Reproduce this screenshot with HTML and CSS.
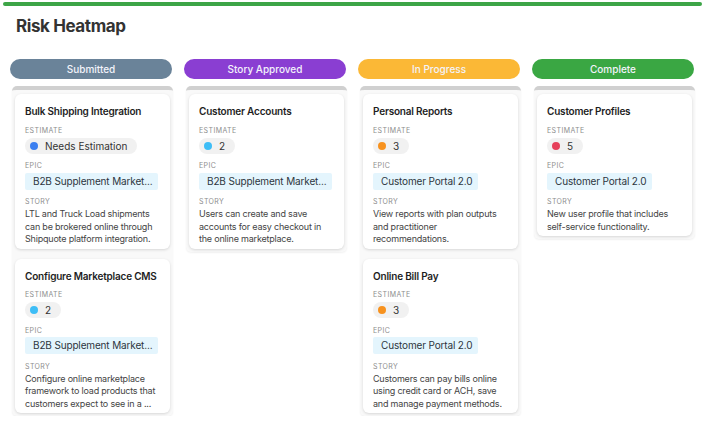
FILE: index.html
```html
<!DOCTYPE html>
<html>
<head>
<meta charset="utf-8">
<link rel="stylesheet" href="styles.css">
</head>
<body>
<div class="topbar"></div>
<h1 class="title">Risk Heatmap</h1>
<div class="board">
  <div class="column">
    <div class="col-head submitted">Submitted</div>
    <div class="col-body">
      <div class="card">
        <div class="card-title">Bulk Shipping Integration</div>
        <div class="label">Estimate</div>
        <div class="pill"><span class="dot blue"></span>Needs Estimation</div>
        <div class="label">Epic</div>
        <div class="epic">B2B Supplement Market...</div>
        <div class="label">Story</div>
        <div class="story">LTL and Truck Load shipments can be brokered online through Shipquote platform integration.</div>
      </div>
      <div class="card">
        <div class="card-title">Configure Marketplace CMS</div>
        <div class="label">Estimate</div>
        <div class="pill"><span class="dot sky"></span>2</div>
        <div class="label">Epic</div>
        <div class="epic">B2B Supplement Market...</div>
        <div class="label">Story</div>
        <div class="story">Configure online marketplace framework to load products that customers expect to see in a ...</div>
      </div>
    </div>
  </div>
  <div class="column">
    <div class="col-head approved">Story Approved</div>
    <div class="col-body">
      <div class="card">
        <div class="card-title">Customer Accounts</div>
        <div class="label">Estimate</div>
        <div class="pill"><span class="dot sky"></span>2</div>
        <div class="label">Epic</div>
        <div class="epic">B2B Supplement Market...</div>
        <div class="label">Story</div>
        <div class="story">Users can create and save accounts for easy checkout in the online marketplace.</div>
      </div>
    </div>
  </div>
  <div class="column">
    <div class="col-head progress">In Progress</div>
    <div class="col-body">
      <div class="card">
        <div class="card-title">Personal Reports</div>
        <div class="label">Estimate</div>
        <div class="pill"><span class="dot orange"></span>3</div>
        <div class="label">Epic</div>
        <div class="epic">Customer Portal 2.0</div>
        <div class="label">Story</div>
        <div class="story">View reports with plan outputs and practitioner recommendations.</div>
      </div>
      <div class="card">
        <div class="card-title">Online Bill Pay</div>
        <div class="label">Estimate</div>
        <div class="pill"><span class="dot orange"></span>3</div>
        <div class="label">Epic</div>
        <div class="epic">Customer Portal 2.0</div>
        <div class="label">Story</div>
        <div class="story">Customers can pay bills online using credit card or ACH, save and manage payment methods.</div>
      </div>
    </div>
  </div>
  <div class="column">
    <div class="col-head complete">Complete</div>
    <div class="col-body">
      <div class="card">
        <div class="card-title">Customer Profiles</div>
        <div class="label">Estimate</div>
        <div class="pill"><span class="dot red"></span>5</div>
        <div class="label">Epic</div>
        <div class="epic">Customer Portal 2.0</div>
        <div class="label">Story</div>
        <div class="story">New user profile that includes self-service functionality.</div>
      </div>
    </div>
  </div>
</div>
</body>
</html>
```
FILE: styles.css
```css
* { box-sizing: border-box; }
body {
  margin: 0;
  background: #ffffff;
  font-family: Inter, "Noto Sans", "Liberation Sans", sans-serif;
  color: #222;
}
.topbar {
  height: 4px;
  margin: 2px 6px 0 3px;
  border-radius: 2px;
  background: #3da547;
}
.title {
  margin: 10px 0 0 16px;
  font-size: 17px;
  line-height: 20px;
  font-weight: 700;
  color: #333;
  letter-spacing: -0.4px;
}
.board {
  display: flex;
  align-items: flex-start;
  gap: 12px;
  padding-left: 10px;
  margin-top: 23px;
}
.column {
  width: 162px;
  display: flex;
  flex-direction: column;
}
.col-head {
  height: 20px;
  border-radius: 10px;
  text-align: center;
  font-size: 10px;
  line-height: 20px;
  font-weight: 500;
  color: #f3f3fb;
}
.submitted { background: #6a8399; }
.approved { background: #8a3ed2; }
.progress { background: #fbb836; }
.complete { background: #3aa743; }
.col-body {
  margin: 7px 0 0 2px;
  width: 161px;
  border-top: 4px solid #d0d0d0;
  border-radius: 5px;
  background: #f9f9f9;
  padding: 4px 3px 3px;
  display: flex;
  flex-direction: column;
  gap: 10px;
  box-shadow: 0 1px 2px rgba(0,0,0,0.06);
}
.card {
  background: #fff;
  border-radius: 6px;
  box-shadow: 0 1px 3px rgba(0,0,0,0.14);
  padding: 11px 10px 3px;
  display: flex;
  flex-direction: column;
  align-items: flex-start;
}
.card-title {
  font-size: 10px;
  line-height: 13px;
  font-weight: 600;
  letter-spacing: -0.2px;
  color: #1e1e1e;
}
.label {
  margin-top: 7.5px;
  font-size: 7px;
  line-height: 9px;
  letter-spacing: 0.4px;
  text-transform: uppercase;
  color: #8d8d8d;
}
.label + .pill { margin-top: 3px; }
.pill {
  height: 16px;
  border-radius: 8px;
  background: #f1f1f1;
  display: flex;
  align-items: center;
  gap: 7px;
  padding: 0 10px 0 5px;
  font-size: 10px;
  color: #333;
}
.pill + .label, .epic + .label { margin-top: 7.5px; }
.dot {
  width: 8px;
  height: 8px;
  border-radius: 50%;
}
.blue { background: #3b7ff0; }
.sky { background: #3dbdf6; }
.orange { background: #f7921f; }
.red { background: #e6405a; }
.epic {
  margin-top: 2.5px;
  height: 17px;
  padding: 0 6px 0 8px;
  background: #e4f5fd;
  border-radius: 2px;
  font-size: 10px;
  line-height: 17px;
  letter-spacing: -0.15px;
  color: #2d3540;
  white-space: nowrap;
}
.story {
  margin-top: 2px;
  font-size: 9px;
  line-height: 12.5px;
  letter-spacing: -0.2px;
  color: #444;
}
```
